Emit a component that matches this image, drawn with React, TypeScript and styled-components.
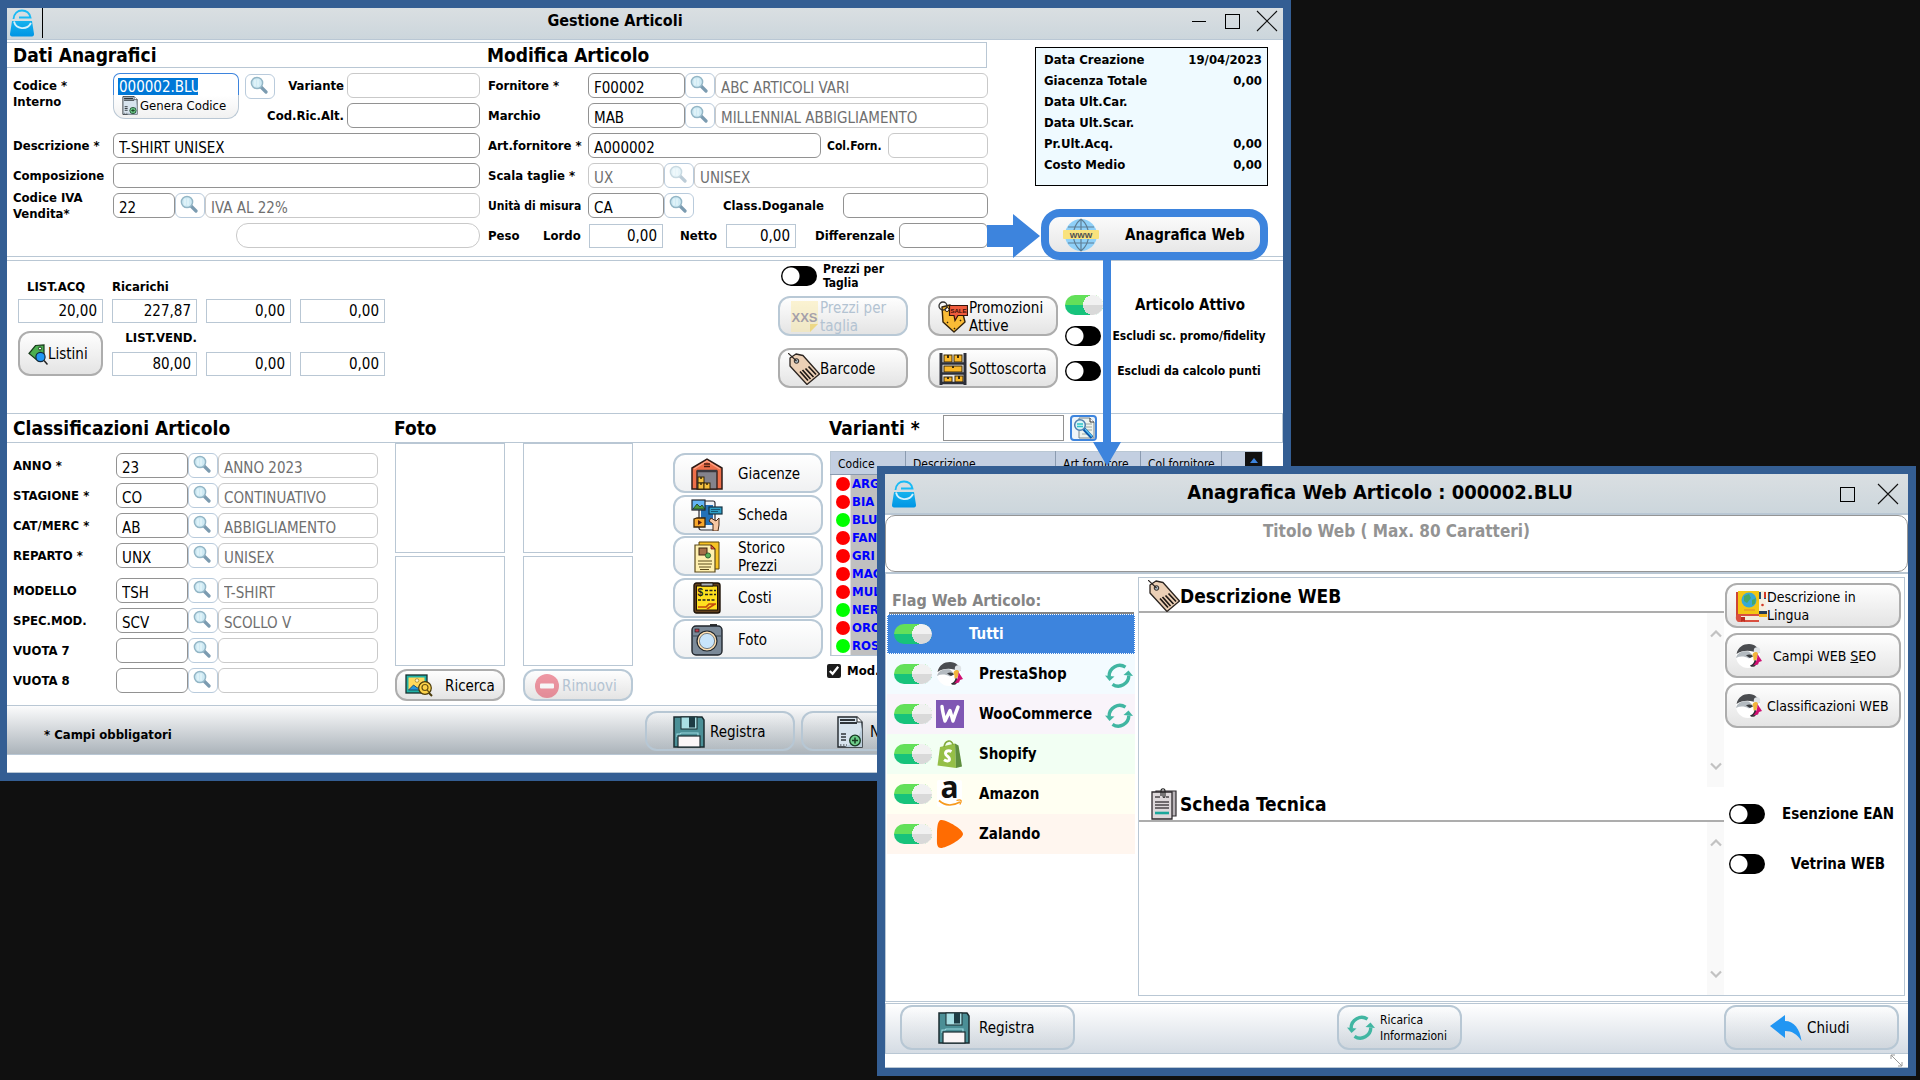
import React from "react";
import styled, { createGlobalStyle, css } from "styled-components";

const LINE = "#b9c7d4";
const FRAME = "#345e93";
const ACCENT = "#3d84dd";

const GlobalStyle = createGlobalStyle`
  *, *::before, *::after { box-sizing: border-box; }
  body {
    margin: 0;
    background: #101010;
    color: #000;
    font-family: "DejaVu Sans Condensed", "Noto Sans", sans-serif;
    font-size: 14px;
  }
  button, input, textarea { font-family: inherit; margin: 0; }
  h1, h2, h3, p, dl, dd { margin: 0; }
`;

/* ---------- desktop and window frames ---------- */

const Desktop = styled.main`
  position: relative;
  min-height: 100vh;
  min-width: 1680px;
  overflow: hidden;
`;

const Frame = styled.section`
  position: absolute;
  display: flex;
  flex-direction: column;
  border: 8px solid ${FRAME};
  background: #fff;
`;

const ArticleFrame = styled(Frame)`
  top: 0;
  left: 0;
  width: calc(100% - 629px);
  min-width: 1291px;
  border-left-width: 7px;
`;

const WebFrame = styled(Frame)`
  top: 466px;
  left: 877px;
  right: 4px;
  min-height: calc(100vh - 470px);
`;

const TitleBar = styled.header<{ $tall?: boolean }>`
  display: grid;
  grid-template-columns: 40px 1fr ${(p) => (p.$tall ? 73 : 100)}px;
  grid-template-rows: ${(p) => (p.$tall ? 39 : 25)}px;
  align-items: center;
  height: ${(p) => (p.$tall ? 41 : 32)}px;
  border-bottom: ${(p) => (p.$tall ? 2 : 1)}px solid ${LINE};
  background: linear-gradient(#dadfe2, #ccd6dc);
`;

const TitleIcon = styled.div<{ $divided?: boolean }>`
  align-self: ${(p) => (p.$divided ? "start" : "center")};
  display: flex;
  align-items: center;
  width: ${(p) => (p.$divided ? 36 : 40)}px;
  height: ${(p) => (p.$divided ? 30 : 32)}px;
  padding-left: ${(p) => (p.$divided ? 2 : 6)}px;
  border-right: ${(p) => (p.$divided ? "1px solid #000" : "0")};
`;

const Title = styled.h1<{ $large?: boolean }>`
  padding-bottom: ${(p) => (p.$large ? 4 : 0)}px;
  font-size: ${(p) => (p.$large ? 20 : 16)}px;
  line-height: 24px;
  text-align: center;
  white-space: nowrap;
`;

const WindowControls = styled.div<{ $wide?: boolean }>`
  display: flex;
  justify-content: flex-end;
  gap: ${(p) => (p.$wide ? 17 : 11)}px;
  padding-right: ${(p) => (p.$wide ? 9 : 5)}px;
`;

const PlainButton = styled.button`
  display: grid;
  place-items: center;
  width: 23px;
  height: 23px;
  padding: 0;
  border: 0;
  background: none;
`;

/* ---------- form parts ---------- */

const Heading = styled.h2`
  font-size: 19px;
  line-height: 24px;
  white-space: nowrap;
`;

const Label = styled.label<{ $indent?: number; $end?: boolean; $small?: boolean }>`
  justify-self: ${(p) => (p.$end ? "end" : "auto")};
  padding-left: ${(p) => p.$indent ?? 0}px;
  padding-right: ${(p) => (p.$end ? 3 : 0)}px;
  font-size: ${(p) => (p.$small ? 12 : 13)}px;
  font-weight: bold;
  line-height: ${(p) => (p.$small ? 14 : 16)}px;
  white-space: pre;
`;

const CodeLabel = styled(Label)`
  padding-top: 5px;
`;

const Field = styled.input<{ $pill?: boolean }>`
  width: 100%;
  min-width: 0;
  height: 25px;
  padding: 4px 5px 0;
  border: 1px solid #929292;
  border-radius: ${(p) => (p.$pill ? 12 : 6)}px;
  background: #fff;
  color: #000;
  font-size: 15px;
  &:read-only {
    border-color: #c9c9c9;
    color: #6f6f6f;
  }
`;

const Amount = styled.input`
  width: 100%;
  min-width: 0;
  height: 24px;
  padding: 0 5px;
  border: 1px solid ${LINE};
  background: #fff;
  color: #000;
  font-size: 15px;
  text-align: right;
`;

const LookupButton = styled.button`
  display: grid;
  place-items: center;
  width: 30px;
  height: 25px;
  padding: 0 2px 3px 0;
  border: 1px solid #b9cbdc;
  border-radius: 6px;
  background: #fff;
  &:disabled svg { opacity: 0.5; }
`;

const Row = styled.div<{ $cols: string }>`
  display: grid;
  grid-template-columns: ${(p) => p.$cols};
  grid-template-rows: 25px;
  align-items: center;
  height: 25px;
`;

const Rows = styled.div`
  display: flex;
  flex-direction: column;
  gap: 5px;
  min-width: 0;
`;

const Button = styled.button<{ $tone?: "grey" | "blue" | "bar"; $h?: number; $size?: number; $gap?: number; $pad?: number; $tight?: boolean }>`
  display: flex;
  align-items: center;
  gap: ${(p) => p.$gap ?? 0}px;
  width: 100%;
  height: ${(p) => p.$h ?? 40}px;
  padding: 1px 4px 0 ${(p) => p.$pad ?? 8}px;
  border: 2px solid #adadad;
  border-radius: 12px;
  background: linear-gradient(#fefefe, #e4e4e4);
  color: #000;
  font-size: ${(p) => p.$size ?? 15}px;
  line-height: ${(p) => (p.$tight ? 16 : 18)}px;
  text-align: left;
  svg { flex: none; }
  ${(p) =>
    p.$tone === "blue" &&
    css`
      border-color: #b9c9d6;
      background: linear-gradient(#fff, #f0f1f2);
    `}
  ${(p) =>
    p.$tone === "bar" &&
    css`
      border-color: #b7c7d4;
      background: linear-gradient(rgba(255, 255, 255, 0.1), rgba(180, 188, 194, 0.25));
    `}
  &:disabled {
    border-color: #b9c9d6;
    color: #b3c3d2;
    svg { opacity: 0.45; }
  }
`;

const Toggle = styled.input.attrs({ type: "checkbox", role: "switch" })`
  appearance: none;
  flex: none;
  width: 36px;
  height: 20px;
  border-radius: 10px;
  background: radial-gradient(circle at 10px 10px, #fff 8px, #000 9px);
  &:checked {
    width: 38px;
    background:
      radial-gradient(circle at 28px 10px, #f1f1f1 10px, transparent 10px) 0 0 / 38px 10px no-repeat,
      radial-gradient(circle at 28px 0, #d9d9d9 10px, transparent 10px) 0 10px / 38px 10px no-repeat,
      linear-gradient(#63e05a 50%, #17c37b 50%);
  }
`;

/* ---------- article window: master data ---------- */

const MasterData = styled.div`
  display: flex;
  margin-top: 2px;
  height: 215px;
  border-bottom: 1px solid ${LINE};
`;

const MasterMain = styled.div`
  flex: 1;
  min-width: 0;
`;

const MasterHeadings = styled.div`
  display: grid;
  grid-template-columns: 1fr 499px;
  height: 26px;
  padding-left: 6px;
  border: 1px solid ${LINE};
  border-left: 0;
`;

const MasterColumns = styled.div`
  display: grid;
  grid-template-columns: minmax(0, 1fr) 500px;
  column-gap: 8px;
  margin-right: -1px;
  padding: 5px 0 0 6px;
`;

const CodeBlock = styled.div`
  display: grid;
  grid-template-columns: 100px 126px 36px minmax(0, 1fr);
  height: 55px;
`;

const CodeBox = styled.div`
  display: flex;
  flex-direction: column;
`;

const SelectedCode = styled.input`
  width: 100%;
  height: 22px;
  padding: 5px 5px 0;
  border: 1px solid ${ACCENT};
  border-bottom: 0;
  border-radius: 7px 7px 0 0;
  background: linear-gradient(#0078d7, #0078d7) 4px 4px / 80px 17px no-repeat #fff;
  color: #fff;
  font-size: 15px;
`;

const GenerateButton = styled.button`
  display: flex;
  align-items: center;
  gap: 2px;
  height: 24px;
  padding: 0 0 3px 8px;
  border: 1px solid ${LINE};
  border-top: 0;
  border-radius: 0 0 12px 12px;
  background: linear-gradient(#fff, #f1f1f1);
  font-size: 13px;
  white-space: nowrap;
`;

const CodeLookup = styled.div`
  padding: 1px 0 0 6px;
`;

const Aside = styled.aside`
  flex: none;
  width: 233px;
  margin: 5px 15px 0 48px;
`;

const InfoBox = styled.dl`
  display: grid;
  grid-template-columns: auto auto;
  grid-auto-rows: 21px;
  align-items: center;
  height: 139px;
  padding: 1px 5px 0 8px;
  border: 1px solid #000;
  background: #effaff;
  font-size: 13px;
  font-weight: bold;
  dd { text-align: right; }
`;

const WebButton = styled.button`
  display: flex;
  align-items: center;
  gap: 26px;
  width: 213px;
  height: 38px;
  margin: 30px 0 0 13px;
  padding: 0 0 0 15px;
  border: 0;
  background: linear-gradient(#fbfbfb, #e6e6e6);
  font-size: 15px;
  font-weight: bold;
  white-space: nowrap;
`;

/* ---------- article window: prices ---------- */

const Prices = styled.div`
  display: flex;
  justify-content: space-between;
  height: 154px;
  margin-top: 3px;
  border: 1px solid ${LINE};
  border-width: 1px 0;
`;

const PriceGrid = styled.div`
  display: grid;
  grid-template-columns: repeat(4, 85px);
  grid-template-rows: 20px 24px 29px 24px;
  column-gap: 9px;
  padding: 18px 0 0 11px;
`;

const ListiniCell = styled.div`
  grid-area: 3 / 1 / 5 / 2;
  align-self: end;
`;

const VendLabel = styled(Label)`
  grid-column: 2;
  align-self: center;
  text-align: right;
`;

const PriceActions = styled.div`
  display: grid;
  grid-template-columns: 150px 137px 212px;
  padding-right: 6px;
`;

const ActionColumn = styled.div`
  display: flex;
  flex-direction: column;
  gap: 12px;
  width: 130px;
  padding-top: 35px;
`;

const SizePriceSwitch = styled.div`
  display: flex;
  align-items: center;
  gap: 6px;
  height: 30px;
  margin: -35px 0 -7px 3px;
`;

const SwitchColumn = styled.div`
  display: grid;
  grid-template-rows: 32px 30px 40px;
  padding: 28px 0 0 0;
`;

const SwitchRow = styled.div<{ $large?: boolean }>`
  display: flex;
  align-items: center;
  label {
    flex: 1;
    font-size: ${(p) => (p.$large ? 15 : 12)}px;
    font-weight: bold;
    text-align: center;
    white-space: nowrap;
  }
`;

/* ---------- article window: classification ---------- */

const ClassHeader = styled.div`
  display: grid;
  grid-template-columns: 381px 435px 114px 121px 1fr;
  align-items: center;
  height: 29px;
  padding-left: 6px;
  border: 1px solid ${LINE};
  border-width: 0 1px 1px 0;
`;

const SearchField = styled(Field)`
  height: 26px;
  border-radius: 0;
`;

const FilterButton = styled(PlainButton)`
  width: 27px;
  height: 26px;
  margin-left: 6px;
  border: 2px solid ${ACCENT};
  border-radius: 4px;
  background: #eef5fa;
`;

const ClassBody = styled.div`
  display: grid;
  grid-template-columns: 388px 238px 40px 150px 7px 1fr;
  height: 262px;
`;

const ClassFields = styled(Rows)`
  padding: 10px 17px 0 6px;
  > :nth-child(5) { margin-top: 5px; }
`;

const Photos = styled.div`
  display: grid;
  grid-template-columns: 110px 110px;
  grid-template-rows: 110px 110px 32px;
  gap: 3px 18px;
`;

const PhotoSlot = styled.div`
  border: 1px solid ${LINE};
`;

const SideButtons = styled.div`
  grid-column: 4;
  display: flex;
  flex-direction: column;
  justify-content: space-between;
  height: 206px;
  margin-top: 10px;
`;

const VariantPane = styled.div`
  grid-column: 6;
  padding: 8px 20px 0 0;
`;

const VariantTable = styled.table`
  width: 100%;
  border: 1px solid ${LINE};
  border-collapse: collapse;
  table-layout: fixed;
  th {
    height: 23px;
    padding: 1px 7px 0;
    border-right: 1px solid #8b9bb0;
    border-bottom: 1px solid #8b9bb0;
    background: #c3cfe1;
    font-size: 12px;
    font-weight: normal;
    text-align: left;
    white-space: nowrap;
  }
  th:last-child { padding: 0; border-right: 0; }
  td {
    height: 18px;
    padding: 0;
    background: #c0c0c0;
    color: #0000ff;
    font-size: 13px;
    font-weight: bold;
    line-height: 18px;
  }
  td:first-child { background: linear-gradient(90deg, #fff 19px, #c0c0c0 19px); }
`;

const VariantCode = styled.span<{ $on: boolean }>`
  display: flex;
  align-items: center;
  gap: 2px;
  padding-left: 5px;
  &::before {
    content: "";
    width: 14px;
    height: 14px;
    border-radius: 50%;
    background: ${(p) => (p.$on ? "#00ff00" : "#ff0000")};
  }
`;

const ScrollUp = styled.button`
  display: grid;
  place-items: center;
  width: 17px;
  height: 22px;
  margin-left: auto;
  padding: 0 0 5px;
  border: 0;
  background: #111;
`;

const CheckLine = styled.label`
  display: flex;
  align-items: center;
  gap: 6px;
  margin: 7px 0 0 -3px;
  font-size: 13px;
  font-weight: bold;
  input {
    width: 14px;
    height: 14px;
    accent-color: #1c1c1c;
  }
`;

const ArticleToolbar = styled.footer`
  display: grid;
  grid-template-columns: 601px 150px 150px;
  column-gap: 6px;
  align-items: center;
  height: 50px;
  padding: 2px 0 0 31px;
  border: 1px solid ${LINE};
  border-width: 1px 0;
  background: linear-gradient(#fbfbfc, #abb3ba);
  p {
    padding: 7px 0 0 6px;
    font-size: 13px;
    font-weight: bold;
  }
`;

const StatusStrip = styled.div<{ $thin?: boolean }>`
  display: flex;
  justify-content: flex-end;
  align-items: center;
  height: ${(p) => (p.$thin ? 14 : 18)}px;
  padding-right: 5px;
  border-bottom: 1px solid ${LINE};
`;

/* ---------- annotation arrows ---------- */

const Annotation = styled.svg`
  position: absolute;
  top: 200px;
  left: 987px;
  pointer-events: none;
`;

/* ---------- web window ---------- */

const WebTitle = styled.textarea`
  display: block;
  width: 100%;
  height: 57px;
  padding: 5px 12px;
  border: 1px solid #959595;
  border-radius: 10px;
  resize: none;
  font-size: 17px;
  font-weight: bold;
  text-align: center;
  &::placeholder { color: #939393; opacity: 1; }
`;

const WebBody = styled.div`
  display: grid;
  grid-template-columns: 252px 1fr;
  flex: 1;
  border: 1px solid ${LINE};
  border-top-width: 2px;
  border-right: 0;
`;

const Flags = styled.div`
  padding: 17px 3px 0 1px;
`;

const FlagsHeading = styled.h2`
  height: 23px;
  margin: 0 1px 0 2px;
  padding-left: 3px;
  border-bottom: 2px solid #858585;
  color: #858585;
  font-size: 16px;
  line-height: 20px;
`;

const FlagRow = styled.div<{ $bg: string; $active?: boolean }>`
  display: grid;
  grid-template-columns: 42px ${(p) => (p.$active ? 33 : 43)}px 1fr 29px;
  align-items: center;
  height: 40px;
  padding-left: 6px;
  border: 1px dotted ${(p) => (p.$active ? "#fff" : p.$bg)};
  background: ${(p) => p.$bg};
  color: ${(p) => (p.$active ? "#fff" : "#000")};
  font-size: 15px;
  font-weight: bold;
  svg { display: block; }
`;

const WebPanel = styled.div`
  display: grid;
  grid-template-columns: 1fr 180px;
  margin: 3px 3px 5px 0;
  border: 1px solid ${LINE};
`;

const Editors = styled.div`
  display: flex;
  flex-direction: column;
`;

const Editor = styled.section`
  flex: 1;
  display: flex;
  flex-direction: column;
`;

const EditorHeading = styled.label`
  display: flex;
  align-items: center;
  height: 35px;
  padding: 2px 0 0 9px;
  border-bottom: 2px solid #adadad;
  font-size: 19px;
  font-weight: bold;
  line-height: 32px;
`;

const EditorArea = styled.div`
  flex: 1;
  display: grid;
  grid-template-columns: 1fr 17px;
  textarea {
    width: 100%;
    height: 100%;
    border: 0;
    outline: 0;
    resize: none;
    font-size: 15px;
  }
`;

const ScrollTrack = styled.div`
  display: flex;
  flex-direction: column;
  justify-content: space-between;
  padding: 15px 0;
  background: #f9f9f9;
`;

const ScrollButton = styled(PlainButton)`
  width: 17px;
  height: 12px;
`;

const WebActions = styled.div`
  display: flex;
  flex-direction: column;
  gap: 5px;
  padding: 5px 3px 0 1px;
`;

const WebSwitches = styled.div`
  display: grid;
  grid-auto-rows: 50px;
  padding-top: 56px;
`;

const WebSwitch = styled.div`
  display: grid;
  grid-template-columns: 46px 1fr;
  align-items: center;
  padding-left: 4px;
  font-size: 15px;
  font-weight: bold;
  text-align: center;
`;

const WebToolbar = styled.footer`
  display: grid;
  grid-template-columns: 175px 125px 175px;
  justify-content: space-between;
  align-items: center;
  height: 51px;
  margin-top: 1px;
  padding: 0 9px 2px 14px;
  border: 1px solid ${LINE};
  border-right: 0;
  background: linear-gradient(#fff, #d5dce4);
`;

/* ---------- drawings ---------- */

const BagIcon = () => (
  <svg width="26" height="28" viewBox="0 0 26 28">
    <defs>
      <linearGradient id="bag" x1="0" y1="0" x2="0" y2="1">
        <stop offset="0" stopColor="#16b2ee" />
        <stop offset="1" stopColor="#0095e4" />
      </linearGradient>
    </defs>
    <path d="M4.500 10C5 4.500 8.500 1.500 13 1.500c4.500 0 7.500 2.500 8.500 7H10" fill="none" stroke="#19baf5" strokeWidth="1.800" />
    <path d="M3 12h20l2 13c.2 1.500-.8 2.500-2 2.500H3c-1.200 0-2.200-1-2-2.500z" fill="url(#bag)" />
    <path d="M5 12.500c2 8 13 9 17 1.500" fill="none" stroke="#d5f1fc" strokeWidth="1.800" />
  </svg>
);

const MinIcon = () => (
  <svg width="16" height="16" viewBox="0 0 16 16"><path d="M1 8.500h14" stroke="#000" /></svg>
);
const MaxIcon = () => (
  <svg width="16" height="16" viewBox="0 0 16 16"><rect x=".5" y="1.500" width="14" height="14" fill="none" stroke="#000" /></svg>
);
const CloseIcon = () => (
  <svg width="22" height="22" viewBox="0 0 22 22"><path d="M1 1l20 20M21 1L1 21" stroke="#111" strokeWidth="1.100" /></svg>
);

const LensIcon = () => (
  <svg width="18" height="18" viewBox="0 0 18 18">
    <path d="M10.500 10.500l5.500 5.500" stroke="#7b9bb0" strokeWidth="3.200" strokeLinecap="round" />
    <circle cx="7" cy="7" r="5.600" fill="#cfeaf4" stroke="#93b6c6" strokeWidth="1.500" />
    <path d="M5 3.800v6.500M8 3.400v7" stroke="#e8f7fb" strokeWidth="1.200" />
  </svg>
);

const DocPlusIcon = ({ w = 26, h = 32 }: { w?: number; h?: number }) => (
  <svg width={w} height={h} viewBox="0 0 26 32">
    <path d="M1 1h19l5 5v25H1z" fill="#d8e4ee" stroke="#20262b" strokeWidth="1.400" />
    <path d="M25 7C24 20 18 27 8 31h17z" fill="#b9ccda" />
    <path d="M3 4h15M3 7h17" stroke="#30363b" strokeWidth="2" />
    <path d="M20 1v5h5" fill="#fff" stroke="#20262b" />
    <path d="M4 18h5M4 21h5M4 24h5" stroke="#30363b" strokeWidth="1.600" />
    <path d="M3 29h7" stroke="#30363b" strokeDasharray="1.500 1.500" />
    <circle cx="18" cy="24.500" r="5.300" fill="#6fce8b" stroke="#153a20" strokeWidth="1.300" />
    <path d="M18 21.500v6M15 24.500h6" stroke="#153a20" strokeWidth="1.500" />
  </svg>
);

const TagSearchIcon = () => (
  <svg width="20" height="21" viewBox="0 0 20 21">
    <path d="M1 9.500L7.500 1.500l8.500-.5v9L10 17z" fill="#4caf50" stroke="#17391b" strokeWidth="1.200" />
    <circle cx="12" cy="4.500" r="1.500" fill="#fff" stroke="#17391b" />
    <circle cx="12.500" cy="13" r="4.600" fill="#2196f3" stroke="#10293f" strokeWidth="1.200" />
    <path d="M16 16.500l3.500 4" stroke="#222" strokeWidth="1.500" />
  </svg>
);

const XxsIcon = () => (
  <svg width="28" height="32" viewBox="0 0 28 32">
    <path d="M1 0h27v23l-8 8H1z" fill="#fbe9a0" />
    <path d="M20 31v-8h8z" fill="#f1c40f" />
    <text x="14.500" y="21" fontSize="13" fontWeight="bold" textAnchor="middle" fontFamily="Liberation Sans, sans-serif" fill="#4a3f55">XXS</text>
  </svg>
);

const SaleIcon = () => (
  <svg width="30" height="32" viewBox="0 0 30 32">
    <path d="M4 6l8-2 4 3 9 6 2 8-11 10L5 21z" fill="#fbbc36" stroke="#33230b" strokeWidth="1.400" strokeLinejoin="round" />
    <circle cx="9" cy="8.500" r="2" fill="#fff" stroke="#33230b" />
    <circle cx="5" cy="5" r="4" fill="none" stroke="#333" strokeWidth="1.300" />
    <path d="M11.500 4.500h18v10H20l-3 5-1-5h-4.500z" fill="#ef5b3c" stroke="#33130b" strokeWidth="1.200" />
    <text x="20.500" y="12" fontSize="6" fontWeight="bold" textAnchor="middle" fontFamily="Liberation Sans, sans-serif" fill="#3a0d05">SALE</text>
    <path d="M9 21l1 1M22 20l1-1M16 27l1 1" stroke="#33230b" strokeWidth="1.500" />
  </svg>
);

const BarcodeTagIcon = () => (
  <svg width="32" height="32" viewBox="0 0 32 32">
    <path d="M2 5v8l17 18.500L31.500 21 15 2.500 8 1z" fill="#ecd0b6" stroke="#2b2420" strokeWidth="1.300" strokeLinejoin="round" />
    <circle cx="8.500" cy="8" r="2.300" fill="#a9b5bd" stroke="#2b2420" />
    <path d="M8.500 8L0 0" stroke="#2b2420" strokeWidth="1.200" />
    <path d="M12 18.500l8 9M14.500 17l8 9M17.500 15.500l8 8.500M20.500 13.500l7.500 8" stroke="#1c1613" strokeWidth="1.700" />
  </svg>
);

const ShelfIcon = () => (
  <svg width="28" height="32" viewBox="0 0 28 32">
    <g fill="#fbb829" stroke="#3b2a0a">
      <rect x="5" y="2" width="8" height="7" /><rect x="15" y="2" width="8" height="7" />
      <rect x="5" y="13" width="18" height="6" />
      <rect x="5" y="24" width="8" height="5" /><rect x="16" y="23" width="8" height="6" />
    </g>
    <path d="M9 2v3M19 2v3M14 13v2M9 24v2M20 23v3" stroke="#3b2a0a" strokeWidth="2" />
    <path d="M2 0v32M26 0v32" stroke="#2d2f38" strokeWidth="3" />
    <path d="M1 10.500h26M1 20.500h26M1 30h26" stroke="#2d2f38" strokeWidth="2.400" />
  </svg>
);

const WarehouseIcon = () => (
  <svg width="32" height="32" viewBox="0 0 32 32">
    <path d="M1 31V10L16 1l15 9v21z" fill="#ee6f4a" stroke="#2c1b17" strokeWidth="1.500" />
    <path d="M3 11L16 3l13 8" fill="none" stroke="#ffa587" strokeWidth="1.200" />
    <path d="M13 6h6M13 8.500h6" stroke="#4a1d10" strokeWidth="1.400" />
    <rect x="6" y="13" width="20" height="18" fill="#84838c" stroke="#2c1b17" strokeWidth="1.300" />
    <path d="M6 13h20" stroke="#3a383e" strokeWidth="2.500" />
    <g fill="#f5c13f" stroke="#35270b"><rect x="7" y="19" width="6" height="6" /><rect x="7" y="25" width="6" height="6" /><rect x="13" y="25" width="6" height="6" /></g>
    <path d="M10 19v2M10 25v2M16 25v2" stroke="#35270b" strokeWidth="1.500" />
  </svg>
);

const CardPhoneIcon = () => (
  <svg width="32" height="32" viewBox="0 0 32 32">
    <rect x="8" y="2" width="16" height="29" rx="2" fill="#f0f2f5" stroke="#2a2a33" strokeWidth="1.200" />
    <rect x="10" y="6" width="12" height="20" fill="#2471b8" />
    <path d="M22 32v-7l-4-3 2-3 5 3 3-3v7l-1 6z" fill="#f7c7a3" stroke="#4a2b17" />
    <rect x="1" y="1" width="13" height="10" fill="#64b5f6" stroke="#20242c" strokeWidth="1.200" />
    <path d="M2 10l4-5 3 3 2-2 3 4z" fill="#4c9a3f" stroke="#1f3a18" strokeWidth=".8" />
    <rect x="18" y="8" width="13" height="7" fill="#2f9fc6" stroke="#143142" strokeWidth="1.200" />
    <path d="M20 10.500h9M20 12.500h7" stroke="#175672" />
    <path d="M3 20l3-1h8v9H3z" fill="#f8a72b" stroke="#3b260a" strokeWidth="1.300" />
    <path d="M7 21l4 2.500-4 2.500z" fill="#5a1d0e" />
  </svg>
);

const PriceHistoryIcon = () => (
  <svg width="26" height="32" viewBox="0 0 26 32">
    <path d="M5 1h20v27H5z" fill="#f7c325" stroke="#5b4307" />
    <path d="M1 4h16l4 4v23H1z" fill="#fff0b0" stroke="#5b4a1c" strokeWidth="1.200" />
    <path d="M17 4v4h4z" fill="#e0563c" stroke="#6b2013" strokeWidth=".8" />
    <rect x="5" y="7" width="8" height="7" fill="#a5714b" stroke="#3c2413" />
    <circle cx="14" cy="14.500" r="2.600" fill="#58b45b" stroke="#21512a" strokeWidth=".8" />
    <path d="M4 20h14M4 23h14M5 26h12M6 28.500h9" stroke="#5b4a1c" strokeWidth="1.100" />
  </svg>
);

const CostIcon = () => (
  <svg width="28" height="32" viewBox="0 0 28 32">
    <rect x="1" y="1" width="26" height="30" rx="2.500" fill="#5f3f1c" stroke="#1d1207" strokeWidth="1.400" />
    <rect x="3.500" y="4" width="21" height="24" fill="#ffdf1f" stroke="#1d1207" />
    <path d="M8 4V1h12v3z" fill="#a9b0b8" stroke="#1d1207" />
    <text x="4.500" y="14" fontSize="10" fontWeight="bold" fontFamily="Liberation Sans, sans-serif" fill="#222">$</text>
    <path d="M12 8.500h11M12 12.500h11M5 18h18" stroke="#222" strokeWidth="1.400" strokeDasharray="3 1.500" />
    <path d="M5 25h8l3-3h7M14 27l8-5" fill="none" stroke="#c3490e" strokeWidth="1.700" />
  </svg>
);

const CameraIcon = () => (
  <svg width="32" height="32" viewBox="0 0 32 32">
    <path d="M19 0h7v3h-7z" fill="#333" />
    <rect x="1" y="2" width="30" height="29" rx="4" fill="#7b8a99" stroke="#20262c" strokeWidth="1.400" />
    <path d="M1 12h6M25 12h6" stroke="#3b4650" />
    <rect x="4" y="5" width="4" height="3" fill="#c0394d" stroke="#222" strokeWidth=".7" />
    <circle cx="16" cy="17" r="10" fill="#ffe1b3" stroke="#20262c" strokeWidth="1.200" />
    <circle cx="16" cy="17" r="7.600" fill="#c7e4fb" stroke="#59636c" strokeWidth=".8" />
  </svg>
);

const PictureSearchIcon = () => (
  <svg width="28" height="24" viewBox="0 0 28 24">
    <rect x="1" y="1" width="21" height="18" fill="#20b2a6" stroke="#17302f" strokeWidth="1.300" />
    <rect x="3.500" y="3.500" width="16" height="12.500" fill="#ffd95c" />
    <path d="M3.500 16l5-5 4 3 2-2 5 4z" fill="#2496dc" stroke="#173a55" strokeWidth=".8" />
    <circle cx="12" cy="6.500" r="1.800" fill="#fff3c4" stroke="#8a6b15" strokeWidth=".6" />
    <circle cx="20" cy="14" r="6.300" fill="#fcd24a" stroke="#4a3a0a" strokeWidth="1.200" />
    <circle cx="20" cy="13.500" r="3" fill="none" stroke="#6b5412" strokeWidth="1.200" />
    <path d="M22 16l2 2" stroke="#6b5412" strokeWidth="1.200" />
    <path d="M24 19l3 3" stroke="#4a3a0a" strokeWidth="2" />
  </svg>
);

const RemoveIcon = () => (
  <svg width="24" height="24" viewBox="0 0 24 24"><circle cx="12" cy="12" r="12" fill="#e0203a" /><rect x="5" y="9.500" width="14" height="5" rx="1" fill="#fff" /></svg>
);

const FloppyIcon = () => (
  <svg width="32" height="32" viewBox="0 0 32 32">
    <path d="M1 1h28l2 3v27H1z" fill="#4b8f96" stroke="#1b2c30" strokeWidth="1.500" />
    <rect x="8" y="1" width="16" height="12" fill="#a9dfe4" stroke="#1b2c30" />
    <rect x="16" y="1" width="6" height="10.500" fill="#1d3c44" />
    <path d="M4 21v-3h3l1-1h17v4" fill="none" stroke="#9ad7de" strokeWidth="1.200" />
    <rect x="5" y="20" width="22" height="11" fill="#faf6f7" stroke="#1b2c30" strokeWidth="1.200" />
  </svg>
);

const GlobeIcon = () => (
  <svg width="36" height="34" viewBox="0 0 36 34">
    <circle cx="18" cy="17" r="16" fill="#8fd0f8" />
    <path d="M18 1v32M5 9h26M5 25h26M18 1C8 9 8 25 18 33M18 1c10 8 10 24 0 32" fill="none" stroke="#5f7f96" strokeWidth="1.200" />
    <rect x="0" y="12" width="36" height="9" rx="1" fill="#f9e27d" />
    <text x="18" y="19.500" fontSize="8" fontWeight="bold" textAnchor="middle" fontFamily="Liberation Sans, sans-serif" fill="#4b4d52">WWW</text>
  </svg>
);

const FilterIcon = () => (
  <svg width="22" height="22" viewBox="0 0 22 22">
    <path d="M6 1h11l4 4v16H6z" fill="#edf3ee" stroke="#7b858a" />
    <path d="M17 1v4h4" fill="#fff" stroke="#333" />
    <path d="M12 7h7M12 10h7M14 13h5M9 17h5" stroke="#9aa6a0" />
    <circle cx="7" cy="8" r="5.300" fill="#d9f6f7" stroke="#4e7fae" strokeWidth="1.500" />
    <path d="M4 7h6M4 9.500h6" stroke="#2fc4c9" strokeWidth="1.300" />
    <path d="M11 12l8 8.500" stroke="#0b57a8" strokeWidth="3.600" />
    <path d="M12 12l7 7.500" stroke="#5bc8f5" strokeWidth="1.200" />
  </svg>
);

const PrestaIcon = () => (
  <svg width="28" height="28" viewBox="0 0 28 28">
    <circle cx="13" cy="14" r="12" fill="#fff" />
    <path d="M1.500 12C3 5 8 2 14 2c6 0 10 4 10.500 9L18 9.500C12 8 6 9 1.500 12z" fill="#4a4c50" />
    <path d="M1 16c1-5 6-7.500 13-6.500l4 4-4 3C9 14 5 14 1 16z" fill="#b4bbc1" />
    <path d="M11 13.500c3-2 6-1 7 1l-3 1.500z" fill="#3a3c40" />
    <circle cx="22" cy="8.500" r="3.200" fill="#dfe3e6" />
    <path d="M15 23.500c3-1 5-4 4.500-7l3 5-3 3c-2 .5-4 .5-4.500-1z" fill="#2e2f33" />
    <path d="M17.500 13c.5-3 4-4 5.500-1.500l-1.500 6-3 1c0-2 0-4-1-5.500z" fill="#f2b53a" />
    <path d="M22.500 12l4.500 7-3 1-1 2.500L18 23.500c3-3 4.500-6.500 4.500-11.500z" fill="#cf0f72" />
  </svg>
);

const WooIcon = () => (
  <svg width="28" height="28" viewBox="0 0 28 28">
    <rect width="28" height="28" fill="#8057b4" />
    <path d="M6 6.500c.5 5 1.500 9 3 14.500l5-10.500 3 10.500c1.500-5 3-9 5-14" fill="none" stroke="#fff" strokeWidth="3.400" strokeLinecap="round" strokeLinejoin="round" />
  </svg>
);

const ShopifyIcon = () => (
  <svg width="28" height="29" viewBox="0 0 28 29">
    <path d="M4 7l15-3.500L20 28 1.500 25.500z" fill="#95bf47" />
    <path d="M19 3.500l3.500 2L26 26.500 20 28z" fill="#5e8e3e" />
    <path d="M8 7c1-7 8-8 9-2" fill="none" stroke="#84ab3d" strokeWidth="1.600" />
    <path d="M15.500 11.500c-3-1.500-6-.5-6 2s4 3 4 5.500-3 2.500-5.500.8" fill="none" stroke="#fff" strokeWidth="2.900" />
  </svg>
);

const AmazonIcon = () => (
  <svg width="28" height="28" viewBox="0 0 28 28">
    <rect x="1" width="25" height="27" rx="2" fill="#fff" />
    <text x="13.500" y="18" fontSize="30" fontWeight="bold" textAnchor="middle" fontFamily="Open Sans, sans-serif" fill="#111">a</text>
    <path d="M3 20.500c6 5.500 14 5.500 21 1.500" fill="none" stroke="#f79a1c" strokeWidth="1.800" />
    <path d="M20.500 20.500c2-.7 4-.7 4.500 0s-.3 3-1.300 4" fill="none" stroke="#f79a1c" strokeWidth="1.300" />
  </svg>
);

const ZalandoIcon = () => (
  <svg width="28" height="28" viewBox="0 0 28 28"><path d="M5 0c5-.5 22 9 22 14S10 28 5 28 1 22 1 14 2 .3 5 0z" fill="#ff6c02" /></svg>
);

const SyncIcon = () => (
  <svg width="28" height="26" viewBox="0 0 28 26">
    <path d="M20.500 4.200A10.500 10.500 0 0 0 4.200 13" fill="none" stroke="#41b6a2" strokeWidth="3.400" />
    <path d="M7.500 21.300A10.500 10.500 0 0 0 23.800 12.500" fill="none" stroke="#41b6a2" strokeWidth="3.400" />
    <path d="M0 12.500l9.500 1L4.500 18z" fill="#41b6a2" />
    <path d="M28 13l-9.500-1L23.500 7.500z" fill="#41b6a2" />
  </svg>
);

const BooksIcon = () => (
  <svg width="32" height="33" viewBox="0 0 32 33">
    <path d="M24 1h7v24h-7z" fill="#f5efe0" />
    <path d="M25 2v7M30 2v7" stroke="#24507c" strokeWidth="2" /><path d="M30 2v6" stroke="#d23a2a" strokeWidth="2" />
    <circle cx="27.500" cy="15" r="1.300" fill="#d23a2a" />
    <path d="M23 21h9v3h-9z" fill="#263c58" /><path d="M23 24h9v3h-9z" fill="#f4b61c" />
    <path d="M1 2h3v28c-3 0-3-2-3-4z" fill="#cf4435" />
    <path d="M3 1h21v23H3z" fill="#f3c614" />
    <path d="M3 24h21v2H6v4h18v2H4c-4 0-4-8-1-8z" fill="#d94f3f" />
    <path d="M6 26h18v4H6z" fill="#f4eddb" />
    <circle cx="14" cy="10" r="7.500" fill="#38a9d6" />
    <path d="M9 6l5-2 2 4-4 5-3-2zM17 10l4-2-1 6-3 1z" fill="#46a868" />
    <path d="M9 20h11" stroke="#e2902a" strokeWidth="1.200" />
    <path d="M6 27h4v5l-2-1.500L6 32z" fill="#b92d20" />
  </svg>
);

const SheetIcon = () => (
  <svg width="26" height="32" viewBox="0 0 26 32">
    <path d="M5 3h20v25H5z" fill="#b9b4b8" stroke="#2e2a2e" strokeWidth="1.200" />
    <path d="M1 4h20v27H1z" fill="#ded9db" stroke="#2e2a2e" strokeWidth="1.300" />
    <path d="M4 9h5M15 9h3M4 14h14M4 17h14M4 20h14" stroke="#4a464a" strokeWidth="1.500" />
    <path d="M4 25h14" stroke="#1aa79b" strokeWidth="2.600" />
    <path d="M10 8V3c0-3 4-3 4 0v5c0 2-2 2-2 0V4" fill="none" stroke="#222" strokeWidth="1.100" />
  </svg>
);

const BackIcon = () => (
  <svg width="32" height="26" viewBox="0 0 32 26"><path d="M0 11L15 0v6c9 0 15 8 16.500 20C27 19 22 16 15 16v7z" fill="#2196f3" /></svg>
);

const GripIcon = () => (
  <svg width="13" height="13" viewBox="0 0 13 13"><path d="M1 5V1h4M1 1l11 11M8 12h4V8" fill="none" stroke="#9a9a9a" /></svg>
);

const Chevron = ({ down }: { down?: boolean }) => (
  <svg width="12" height="8" viewBox="0 0 12 8"><path d={down ? "M1 1.500l5 5 5-5" : "M1 6.500l5-5 5 5"} fill="none" stroke="#c2c2c2" strokeWidth="2.200" /></svg>
);

/* ---------- data ---------- */

const classifications = [
  { label: "ANNO *", code: "23", text: "ANNO 2023" },
  { label: "STAGIONE *", code: "CO", text: "CONTINUATIVO" },
  { label: "CAT/MERC *", code: "AB", text: "ABBIGLIAMENTO" },
  { label: "REPARTO *", code: "UNX", text: "UNISEX" },
  { label: "MODELLO", code: "TSH", text: "T-SHIRT" },
  { label: "SPEC.MOD.", code: "SCV", text: "SCOLLO V" },
  { label: "VUOTA 7", code: "", text: "" },
  { label: "VUOTA 8", code: "", text: "" },
];

const info = [
  ["Data Creazione", "19/04/2023"],
  ["Giacenza Totale", "0,00"],
  ["Data Ult.Car.", ""],
  ["Data Ult.Scar.", ""],
  ["Pr.Ult.Acq.", "0,00"],
  ["Costo Medio", "0,00"],
];

const variants: [string, boolean][] = [
  ["ARG", false], ["BIA", false], ["BLU", true], ["FAN", false], ["GRI", false],
  ["MAG", false], ["MUL", false], ["NER", true], ["ORO", false], ["ROS", true],
];

const sideActions = [
  { text: "Giacenze", icon: <WarehouseIcon /> },
  { text: "Scheda", icon: <CardPhoneIcon /> },
  { text: "Storico Prezzi", icon: <PriceHistoryIcon /> },
  { text: "Costi", icon: <CostIcon /> },
  { text: "Foto", icon: <CameraIcon /> },
];

const channels = [
  { name: "Tutti", bg: ACCENT, icon: null, sync: false, active: true },
  { name: "PrestaShop", bg: "#f3fbff", icon: <PrestaIcon />, sync: true },
  { name: "WooCommerce", bg: "#f9f4fa", icon: <WooIcon />, sync: true },
  { name: "Shopify", bg: "#f2fff3", icon: <ShopifyIcon />, sync: false },
  { name: "Amazon", bg: "#fffff2", icon: <AmazonIcon />, sync: false },
  { name: "Zalando", bg: "#fff6ef", icon: <ZalandoIcon />, sync: false },
];

const IconSlot = styled.span`
  display: grid;
  place-items: center;
  flex: none;
  width: 32px;
`;

const SideText = styled.span`
  width: 70px;
`;

/* ---------- compound parts ---------- */

const Lookup = ({ name, disabled }: { name: string; disabled?: boolean }) => (
  <LookupButton type="button" aria-label={`Cerca ${name}`} disabled={disabled}>
    <LensIcon />
  </LookupButton>
);

const ArticleData = () => (
  <MasterData>
    <MasterMain>
      <MasterHeadings>
        <Heading>Dati Anagrafici</Heading>
        <Heading>Modifica Articolo</Heading>
      </MasterHeadings>
      <MasterColumns>
        <Rows>
          <CodeBlock>
            <CodeLabel htmlFor="codice">{"Codice *\nInterno"}</CodeLabel>
            <CodeBox>
              <SelectedCode id="codice" defaultValue="000002.BLU" />
              <GenerateButton type="button"><DocPlusIcon w={16} h={19} />Genera Codice</GenerateButton>
            </CodeBox>
            <CodeLookup><Lookup name="codice" /></CodeLookup>
            <Rows>
              <Row $cols="minmax(0, 1fr) 133px"><Label htmlFor="variante" $end>Variante</Label><Field id="variante" readOnly /></Row>
              <Row $cols="minmax(0, 1fr) 133px"><Label htmlFor="ricalt" $end>Cod.Ric.Alt.</Label><Field id="ricalt" /></Row>
            </Rows>
          </CodeBlock>
          <Row $cols="100px 1fr"><Label htmlFor="descrizione">Descrizione *</Label><Field id="descrizione" defaultValue="T-SHIRT UNISEX" /></Row>
          <Row $cols="100px 1fr"><Label htmlFor="composizione">Composizione</Label><Field id="composizione" /></Row>
          <Row $cols="100px 62px 30px 1fr">
            <Label htmlFor="iva">{"Codice IVA\nVendita*"}</Label>
            <Field id="iva" defaultValue="22" />
            <Lookup name="IVA" />
            <Field aria-label="Descrizione IVA" readOnly value="IVA AL 22%" />
          </Row>
          <Row $cols="123px 1fr"><span /><Row $cols="100px 1fr"><span /><Field aria-label="Nota IVA" $pill readOnly /></Row></Row>
        </Rows>
        <Rows>
          <Row $cols="100px 97px 30px 1fr">
            <Label htmlFor="fornitore">Fornitore *</Label>
            <Field id="fornitore" defaultValue="F00002" />
            <Lookup name="fornitore" />
            <Field aria-label="Nome fornitore" readOnly value="ABC ARTICOLI VARI" />
          </Row>
          <Row $cols="100px 97px 30px 1fr">
            <Label htmlFor="marchio">Marchio</Label>
            <Field id="marchio" defaultValue="MAB" />
            <Lookup name="marchio" />
            <Field aria-label="Nome marchio" readOnly value="MILLENNIAL ABBIGLIAMENTO" />
          </Row>
          <Row $cols="100px 233px 67px 1fr">
            <Label htmlFor="artforn">Art.fornitore *</Label>
            <Field id="artforn" defaultValue="A000002" />
            <Label htmlFor="colforn" $indent={6} $small>Col.Forn.</Label>
            <Field id="colforn" readOnly />
          </Row>
          <Row $cols="100px 76px 30px 1fr">
            <Label htmlFor="scala">Scala taglie *</Label>
            <Field id="scala" readOnly value="UX" />
            <Lookup name="scala taglie" disabled />
            <Field aria-label="Nome scala taglie" readOnly value="UNISEX" />
          </Row>
          <Row $cols="100px 76px 30px 149px 1fr">
            <Label htmlFor="um" $small>Unità di misura</Label>
            <Field id="um" defaultValue="CA" />
            <Lookup name="unità di misura" />
            <Label htmlFor="doganale" $indent={29}>Class.Doganale</Label>
            <Field id="doganale" />
          </Row>
          <Row $cols="55px 46px 74px 63px 70px 103px 1fr">
            <Label as="span">Peso</Label>
            <Label htmlFor="lordo">Lordo</Label>
            <Amount id="lordo" defaultValue="0,00" />
            <Label htmlFor="netto" $indent={17}>Netto</Label>
            <Amount id="netto" defaultValue="0,00" />
            <Label htmlFor="diff" $indent={19}>Differenzale</Label>
            <Field id="diff" />
          </Row>
        </Rows>
      </MasterColumns>
    </MasterMain>
    <Aside>
      <InfoBox>
        {info.map(([k, v]) => (
          <React.Fragment key={k}><dt>{k}</dt><dd>{v}</dd></React.Fragment>
        ))}
      </InfoBox>
      <WebButton type="button"><GlobeIcon />Anagrafica Web</WebButton>
    </Aside>
  </MasterData>
);

const PriceSection = () => (
  <Prices>
    <PriceGrid>
      <Label htmlFor="p1" $indent={9}>LIST.ACQ</Label>
      <Label htmlFor="p2">Ricarichi</Label>
      <span /><span />
      <Amount id="p1" defaultValue="20,00" />
      <Amount id="p2" defaultValue="227,87" />
      <Amount aria-label="Ricarico 2" defaultValue="0,00" />
      <Amount aria-label="Ricarico 3" defaultValue="0,00" />
      <ListiniCell><Button type="button" $h={45}><TagSearchIcon />Listini</Button></ListiniCell>
      <VendLabel htmlFor="v1">LIST.VEND.</VendLabel>
      <span /><span />
      <Amount id="v1" defaultValue="80,00" />
      <Amount aria-label="Listino 2" defaultValue="0,00" />
      <Amount aria-label="Listino 3" defaultValue="0,00" />
    </PriceGrid>
    <PriceActions>
      <ActionColumn>
        <SizePriceSwitch>
          <Toggle id="sizeprice" />
          <Label htmlFor="sizeprice" $small>{"Prezzi per\nTaglia"}</Label>
        </SizePriceSwitch>
        <Button type="button" disabled $pad={10} $gap={2}><XxsIcon />Prezzi per taglia</Button>
        <Button type="button"><BarcodeTagIcon />Barcode</Button>
      </ActionColumn>
      <ActionColumn>
        <Button type="button" $gap={1}><SaleIcon />Promozioni Attive</Button>
        <Button type="button" $pad={9} $gap={2}><ShelfIcon />Sottoscorta</Button>
      </ActionColumn>
      <SwitchColumn>
        <SwitchRow $large><Toggle id="attivo" defaultChecked /><label htmlFor="attivo">Articolo Attivo</label></SwitchRow>
        <SwitchRow><Toggle id="promo" /><label htmlFor="promo">Escludi sc. promo/fidelity</label></SwitchRow>
        <SwitchRow><Toggle id="punti" /><label htmlFor="punti">Escludi da calcolo punti</label></SwitchRow>
      </SwitchColumn>
    </PriceActions>
  </Prices>
);

const ClassSection = () => (
  <>
    <ClassHeader>
      <Heading>Classificazioni Articolo</Heading>
      <Heading>Foto</Heading>
      <Heading>Varianti *</Heading>
      <SearchField aria-label="Cerca variante" />
      <FilterButton type="button" aria-label="Filtra varianti"><FilterIcon /></FilterButton>
    </ClassHeader>
    <ClassBody>
      <ClassFields>
        {classifications.map((c) => (
          <Row key={c.label} $cols="103px 72px 30px 1fr">
            <Label htmlFor={c.label}>{c.label}</Label>
            <Field id={c.label} defaultValue={c.code} />
            <Lookup name={c.label} />
            <Field aria-label={`Descrizione ${c.label}`} readOnly value={c.text} />
          </Row>
        ))}
      </ClassFields>
      <Photos>
        <PhotoSlot /><PhotoSlot /><PhotoSlot /><PhotoSlot />
        <Button type="button" $h={32} $gap={12}><PictureSearchIcon />Ricerca</Button>
        <Button type="button" $h={32} $gap={3} $pad={10} disabled><RemoveIcon />Rimuovi</Button>
      </Photos>
      <SideButtons>
        {sideActions.map((a) => (
          <Button key={a.text} type="button" $tone="blue" $pad={16} $gap={15}>
            <IconSlot>{a.icon}</IconSlot><SideText>{a.text}</SideText>
          </Button>
        ))}
      </SideButtons>
      <VariantPane>
        <VariantTable>
          <colgroup><col width="75" /><col width="150" /><col width="85" /><col width="81" /><col /></colgroup>
          <thead>
            <tr>
              <th>Codice</th><th>Descrizione</th><th>Art.fornitore</th><th>Col.fornitore</th>
              <th>
                <ScrollUp type="button" aria-label="Scorri in alto">
                  <svg width="8" height="5" viewBox="0 0 8 5"><path d="M0 5l4-5 4 5z" fill="#3d84dd" /></svg>
                </ScrollUp>
              </th>
            </tr>
          </thead>
          <tbody>
            {variants.map(([code, on]) => (
              <tr key={code}><td><VariantCode $on={on}>{code}</VariantCode></td><td /><td /><td /><td /></tr>
            ))}
          </tbody>
        </VariantTable>
        <CheckLine><input type="checkbox" defaultChecked />Mod.</CheckLine>
      </VariantPane>
    </ClassBody>
  </>
);

const TextEditor = ({ id, title, icon }: { id: string; title: string; icon: React.ReactNode }) => (
  <Editor>
    <EditorHeading htmlFor={id}><IconSlot>{icon}</IconSlot>{title}</EditorHeading>
    <EditorArea>
      <textarea id={id} />
      <ScrollTrack>
        <ScrollButton type="button" aria-label="Su"><Chevron /></ScrollButton>
        <ScrollButton type="button" aria-label="Giù"><Chevron down /></ScrollButton>
      </ScrollTrack>
    </EditorArea>
  </Editor>
);

const ArticleWindow = () => (
  <ArticleFrame aria-label="Gestione Articoli">
    <TitleBar>
      <TitleIcon $divided><BagIcon /></TitleIcon>
      <Title>Gestione Articoli</Title>
      <WindowControls>
        <PlainButton type="button" aria-label="Riduci"><MinIcon /></PlainButton>
        <PlainButton type="button" aria-label="Ingrandisci"><MaxIcon /></PlainButton>
        <PlainButton type="button" aria-label="Chiudi finestra"><CloseIcon /></PlainButton>
      </WindowControls>
    </TitleBar>
    <ArticleData />
    <PriceSection />
    <ClassSection />
    <ArticleToolbar>
      <p>* Campi obbligatori</p>
      <Button type="button" $tone="bar" $pad={26} $gap={5}><FloppyIcon />Registra</Button>
      <Button type="button" $tone="bar" $pad={34} $gap={7}><DocPlusIcon />Nuovo</Button>
    </ArticleToolbar>
    <StatusStrip />
  </ArticleFrame>
);

const WebWindow = () => (
  <WebFrame aria-label="Anagrafica Web Articolo">
    <TitleBar $tall>
      <TitleIcon><BagIcon /></TitleIcon>
      <Title $large>Anagrafica Web Articolo : 000002.BLU</Title>
      <WindowControls $wide>
        <PlainButton type="button" aria-label="Ingrandisci"><MaxIcon /></PlainButton>
        <PlainButton type="button" aria-label="Chiudi finestra"><CloseIcon /></PlainButton>
      </WindowControls>
    </TitleBar>
    <WebTitle aria-label="Titolo Web" placeholder="Titolo Web ( Max. 80 Caratteri)" />
    <WebBody>
      <Flags>
        <FlagsHeading>Flag Web Articolo:</FlagsHeading>
        {channels.map((c) => (
          <FlagRow key={c.name} $bg={c.bg} $active={c.active}>
            <Toggle id={c.name} defaultChecked />
            <span>{c.icon}</span>
            <label htmlFor={c.name}>{c.name}</label>
            {c.sync && <PlainButton type="button" aria-label={`Sincronizza ${c.name}`}><SyncIcon /></PlainButton>}
          </FlagRow>
        ))}
      </Flags>
      <WebPanel>
        <Editors>
          <TextEditor id="descweb" title="Descrizione WEB" icon={<BarcodeTagIcon />} />
          <TextEditor id="scheda" title="Scheda Tecnica" icon={<SheetIcon />} />
        </Editors>
        <WebActions>
          <Button type="button" $h={45} $size={14}><BooksIcon />Descrizione in Lingua</Button>
          <Button type="button" $h={45} $size={14} $gap={10}><PrestaIcon /><span>Campi WEB <u>S</u>EO</span></Button>
          <Button type="button" $h={45} $size={14} $gap={4}><PrestaIcon />Classificazioni WEB</Button>
          <WebSwitches>
            <WebSwitch><Toggle id="ean" /><label htmlFor="ean">Esenzione EAN</label></WebSwitch>
            <WebSwitch><Toggle id="vetrina" /><label htmlFor="vetrina">Vetrina WEB</label></WebSwitch>
          </WebSwitches>
        </WebActions>
      </WebPanel>
    </WebBody>
    <WebToolbar>
      <Button type="button" $tone="bar" $h={45} $pad={36} $gap={9}><FloppyIcon />Registra</Button>
      <Button type="button" $tone="bar" $h={45} $size={12} $gap={5} $tight><SyncIcon />Ricarica Informazioni</Button>
      <Button type="button" $tone="bar" $h={45} $pad={44} $gap={5}><BackIcon />Chiudi</Button>
    </WebToolbar>
    <StatusStrip $thin><GripIcon /></StatusStrip>
  </WebFrame>
);

const Arrows = () => (
  <Annotation width="290" height="270" viewBox="0 0 290 270" aria-hidden="true">
    <path d="M0 25h26V14l27 22-27 22V47H0z" fill={ACCENT} />
    <rect x="58" y="13" width="219" height="43" rx="15" fill="none" stroke={ACCENT} strokeWidth="8" />
    <path d="M116 58h8v184h10l-14 24-14-24h10z" fill={ACCENT} />
  </Annotation>
);

export default function App() {
  return (
    <Desktop>
      <GlobalStyle />
      <ArticleWindow />
      <Arrows />
      <WebWindow />
    </Desktop>
  );
}
